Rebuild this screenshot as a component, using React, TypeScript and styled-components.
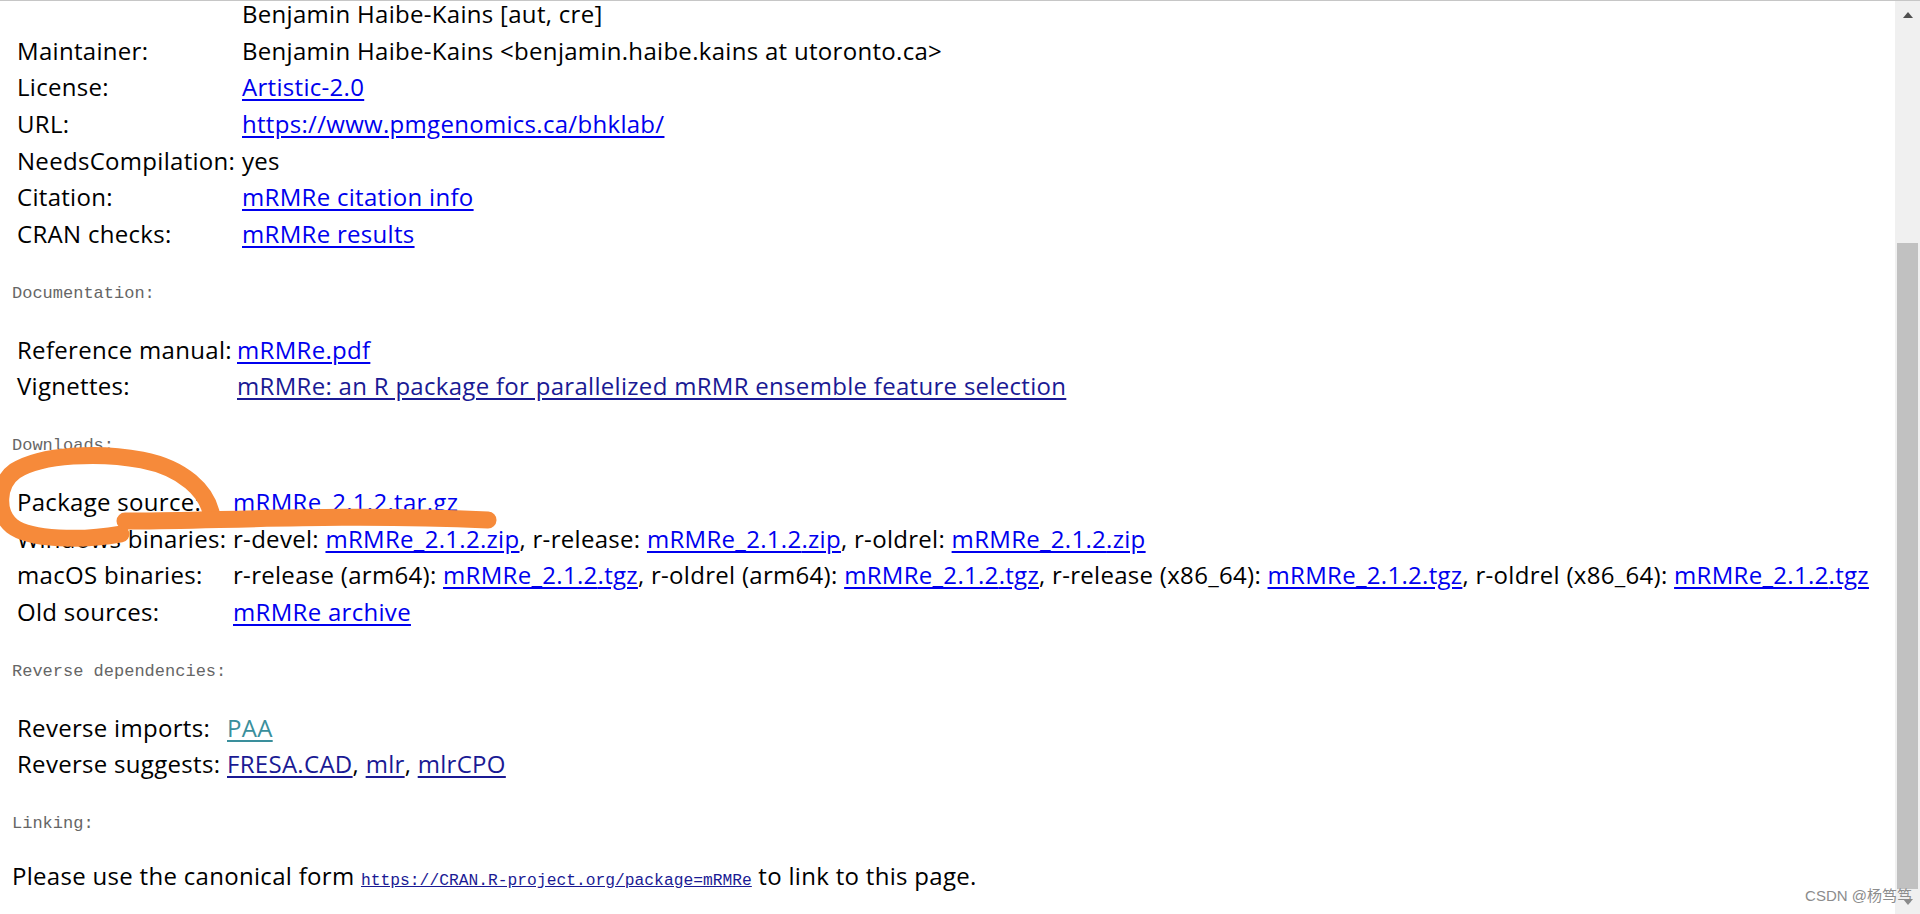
import React from "react";
import styled, { createGlobalStyle } from "styled-components";

const GlobalStyle = createGlobalStyle`
  html, body {
    margin: 0;
    padding: 0;
    background: #ffffff;
    overflow: hidden;
  }
`;

type Tone = "link" | "visited" | "teal";

type Row = {
  label: string;
  value: React.ReactNode;
};

const L = (props: { children: React.ReactNode; tone?: Tone }) => (
  <Link href="#" $tone={props.tone || "link"}>
    {props.children}
  </Link>
);

const pkg = "mRMRe_2.1.2";

const details: Row[] = [
  { label: "", value: "Benjamin Haibe-Kains [aut, cre]" },
  { label: "Maintainer:", value: "Benjamin Haibe-Kains <benjamin.haibe.kains at utoronto.ca>" },
  { label: "License:", value: <L>Artistic-2.0</L> },
  { label: "URL:", value: <L>https://www.pmgenomics.ca/bhklab/</L> },
  { label: "NeedsCompilation:", value: "yes" },
  { label: "Citation:", value: <L>mRMRe citation info</L> },
  { label: "CRAN checks:", value: <L>mRMRe results</L> },
];

const docs: Row[] = [
  { label: "Reference manual:", value: <L>mRMRe.pdf</L> },
  {
    label: "Vignettes:",
    value: <L tone="visited">mRMRe: an R package for parallelized mRMR ensemble feature selection</L>,
  },
];

const downloads: Row[] = [
  { label: "Package source:", value: <L>{pkg}.tar.gz</L> },
  {
    label: "Windows binaries:",
    value: (
      <>
        r-devel: <L>{pkg}.zip</L>, r-release: <L>{pkg}.zip</L>, r-oldrel: <L>{pkg}.zip</L>
      </>
    ),
  },
  {
    label: "macOS binaries:",
    value: (
      <>
        r-release (arm64): <L>{pkg}.tgz</L>, r-oldrel (arm64): <L>{pkg}.tgz</L>, r-release
        (x86_64): <L>{pkg}.tgz</L>, r-oldrel (x86_64): <L>{pkg}.tgz</L>
      </>
    ),
  },
  { label: "Old sources:", value: <L>mRMRe archive</L> },
];

const reverse: Row[] = [
  { label: "Reverse imports:", value: <L tone="teal">PAA</L> },
  {
    label: "Reverse suggests:",
    value: (
      <>
        <L tone="visited">FRESA.CAD</L>, <L tone="visited">mlr</L>,{" "}
        <L tone="visited">mlrCPO</L>
      </>
    ),
  },
];

const InfoTable = (props: { rows: Row[]; labelWidth: number }) => (
  <Table $labelWidth={props.labelWidth}>
    {props.rows.map((row, i) => (
      <React.Fragment key={i}>
        <Label>{row.label}</Label>
        <Value>{row.value}</Value>
      </React.Fragment>
    ))}
  </Table>
);

const App: React.FC = () => {
  return (
    <>
      <GlobalStyle />
      <Frame>
        <Content>
          <InfoTable rows={details} labelWidth={225} />
          <Heading>Documentation:</Heading>
          <InfoTable rows={docs} labelWidth={220} />
          <Heading>Downloads:</Heading>
          <InfoTable rows={downloads} labelWidth={216} />
          <Heading>Reverse dependencies:</Heading>
          <InfoTable rows={reverse} labelWidth={210} />
          <Heading>Linking:</Heading>
          <Paragraph>
            Please use the canonical form{" "}
            <CodeLink href="#">https://CRAN.R-project.org/package=mRMRe</CodeLink> to link to
            this page.
          </Paragraph>
          <Scribble width="520" height="560" viewBox="0 0 520 560">
            <path
              d="M212 516 C208 490 183 467 142 459 C100 451 42 453 15 470 C-3 483 -4 512 12 525 C30 539 82 540 121 533"
              fill="none"
              stroke="#f68a3a"
              strokeWidth="17"
              strokeLinecap="round"
            />
            <path
              d="M125 520 C200 521 330 512 488 519"
              fill="none"
              stroke="#f68a3a"
              strokeWidth="17"
              strokeLinecap="round"
            />
          </Scribble>
        </Content>
        <Scrollbar>
          <ArrowButton>
            <ArrowUp />
          </ArrowButton>
          <Track>
            <Thumb />
          </Track>
          <ArrowButton $bottom>
            <ArrowDown />
          </ArrowButton>
        </Scrollbar>
        <Watermark>CSDN @杨笃笃</Watermark>
      </Frame>
    </>
  );
};

const Frame = styled.div`
  position: relative;
  display: flex;
  height: 914px;
  box-sizing: border-box;
  border-top: 1px solid #c6c6c6;
  overflow: hidden;
`;

const Content = styled.div`
  position: relative;
  flex: 1;
  margin-top: -5px;
  padding-left: 12px;
  font-family: "Open Sans", "Noto Sans", sans-serif;
  font-size: 24px;
  letter-spacing: 0.3px;
  color: #000000;
`;

const Table = styled.div<{ $labelWidth: number }>`
  display: grid;
  grid-template-columns: ${(p) => p.$labelWidth}px auto;
  justify-content: start;
  padding-left: 5px;
`;

const Label = styled.div`
  line-height: 36.67px;
  height: 36.67px;
  white-space: nowrap;
`;

const Value = styled.div`
  line-height: 36.67px;
  height: 36.67px;
  white-space: nowrap;
`;

const Link = styled.a<{ $tone: Tone }>`
  color: ${(p) =>
    p.$tone === "visited" ? "#1a1a94" : p.$tone === "teal" ? "#3a8f9c" : "#0000ee"};
  text-decoration: underline;
  text-underline-offset: 3px;
`;

const Heading = styled.h4`
  margin: 31px 0 28px;
  font-family: "Liberation Mono", "DejaVu Sans Mono", monospace;
  font-size: 17px;
  font-weight: normal;
  letter-spacing: 0;
  line-height: 20px;
  color: #666666;
`;

const Paragraph = styled.p`
  margin: -4px 0 0;
  line-height: 36.67px;
  white-space: nowrap;
`;

const CodeLink = styled.a`
  font-family: "Liberation Mono", "DejaVu Sans Mono", monospace;
  font-size: 16.3px;
  letter-spacing: 0;
  color: #1a1a94;
  text-decoration: underline;
`;

const Scribble = styled.svg`
  position: absolute;
  left: 0;
  top: 5px;
  pointer-events: none;
`;

const Scrollbar = styled.div`
  width: 25px;
  flex: none;
  display: flex;
  flex-direction: column;
  background: #f0f0f0;
`;

const ArrowButton = styled.div<{ $bottom?: boolean }>`
  height: ${(p) => (p.$bottom ? 24 : 27)}px;
  display: flex;
  align-items: center;
  justify-content: center;
`;

const ArrowUp = styled.div`
  width: 0;
  height: 0;
  border-left: 5px solid transparent;
  border-right: 5px solid transparent;
  border-bottom: 6px solid #505050;
`;

const ArrowDown = styled.div`
  width: 0;
  height: 0;
  border-left: 5px solid transparent;
  border-right: 5px solid transparent;
  border-top: 6px solid #8a8a8a;
`;

const Track = styled.div`
  flex: 1;
  display: flex;
  padding: 215px 2px 1px;
`;

const Thumb = styled.div`
  flex: 1;
  background: #c1c1c1;
`;

const Watermark = styled.div`
  position: absolute;
  right: 8px;
  bottom: 9px;
  font-family: "Liberation Sans", "Noto Sans CJK SC", sans-serif;
  font-size: 15px;
  color: #8c8c8c;
  pointer-events: none;
`;

export default App;
